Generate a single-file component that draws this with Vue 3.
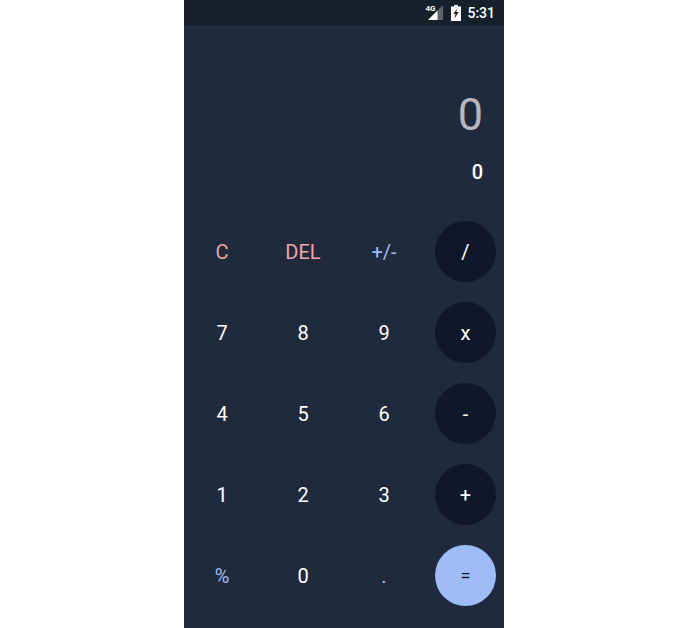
<script setup>
const keys = [
  { label: 'C', kind: 'danger' },
  { label: 'DEL', kind: 'danger' },
  { label: '+/-', kind: 'accent' },
  { label: '/', kind: 'op' },
  { label: '7' },
  { label: '8' },
  { label: '9' },
  { label: 'x', kind: 'op' },
  { label: '4' },
  { label: '5' },
  { label: '6' },
  { label: '-', kind: 'op' },
  { label: '1' },
  { label: '2' },
  { label: '3' },
  { label: '+', kind: 'op' },
  { label: '%', kind: 'accent' },
  { label: '0' },
  { label: '.', kind: 'accent' },
  { label: '=', kind: 'equals' },
]
</script>

<template>
  <div class="page">
    <div class="phone">
      <header class="status-bar">
        <span class="network">
          <span class="net-label">4G</span>
          <svg class="signal" width="15" height="15" viewBox="0 0 15 15">
            <path d="M15 0V15H0Z" fill="#ffffff" fill-opacity="0.3" />
            <path d="M9.5 5.5V15H0Z" fill="#ffffff" />
          </svg>
        </span>
        <svg class="battery" width="10" height="16" viewBox="0 0 10 16">
          <path d="M3 0H7V1.5H10V16H0V1.5H3Z" fill="#ffffff" />
          <path d="M6.2 3.4L2.4 9H4.5L3.6 13.4L7.6 7H5.2Z" fill="#17212c" />
        </svg>
        <span class="clock">5:31</span>
      </header>

      <section class="display">
        <div class="expression">0</div>
        <div class="result">0</div>
      </section>

      <section class="keypad">
        <button
          v-for="key in keys"
          :key="key.label"
          type="button"
          class="key"
          :class="key.kind"
        >
          {{ key.label }}
        </button>
      </section>
    </div>
  </div>
</template>

<style scoped>
.page {
  display: flex;
  width: 680px;
  height: 628px;
  padding-left: 184px;
  box-sizing: border-box;
  background: #ffffff;
}

.phone {
  display: flex;
  flex-direction: column;
  width: 320px;
  height: 628px;
  background: #1f2a3c;
  font-family: Roboto, "Liberation Sans", sans-serif;
}

.status-bar {
  display: flex;
  align-items: center;
  justify-content: flex-end;
  height: 25px;
  padding-right: 9px;
  box-sizing: border-box;
  background: #17212c;
}

.network {
  position: relative;
  display: block;
  width: 18px;
  height: 15px;
  margin-right: 8px;
}

.net-label {
  position: absolute;
  top: -1px;
  left: 0;
  color: #ffffff;
  font-size: 8px;
  font-weight: 700;
  line-height: 10px;
}

.signal {
  position: absolute;
  top: 0;
  left: 3px;
}

.battery {
  margin-right: 6px;
}

.clock {
  color: #ffffff;
  font-size: 14px;
  font-weight: 500;
}

.display {
  display: flex;
  flex-direction: column;
  align-items: flex-end;
  height: 196px;
  padding-right: 21px;
  box-sizing: border-box;
}

.expression {
  margin-top: 62px;
  color: #b4b8be;
  font-size: 45px;
  line-height: 56px;
}

.result {
  margin-top: 16px;
  color: #ffffff;
  font-size: 20px;
  font-weight: 500;
  line-height: 26px;
}

.keypad {
  display: grid;
  grid-template-columns: repeat(4, 61px);
  grid-auto-rows: 61px;
  gap: 20px;
  padding: 0 8px;
}

.key {
  padding: 0 1px 0 0;
  border: 0;
  border-radius: 50%;
  background: transparent;
  color: #ffffff;
  font-family: inherit;
  font-size: 20px;
}

.danger {
  color: #eda4aa;
}

.accent {
  color: #a0bcf8;
}

.op {
  padding: 0;
  background: #0e182a;
}

.equals {
  padding: 0;
  background: #a0bcf8;
  color: #0e182a;
  font-size: 18px;
}
</style>
